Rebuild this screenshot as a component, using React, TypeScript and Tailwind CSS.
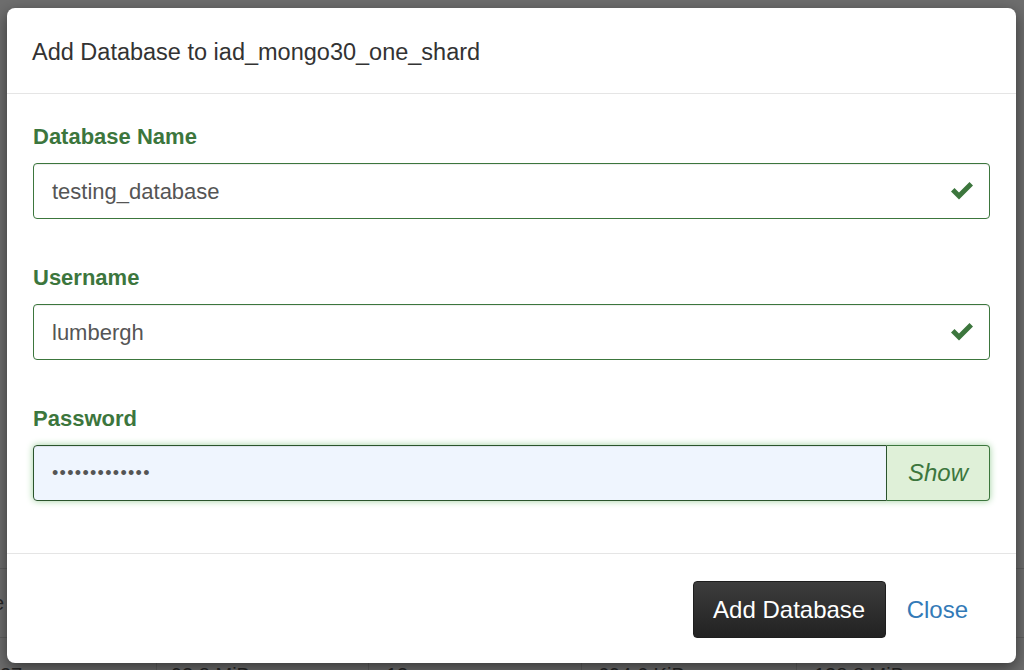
import React from 'react';

const font = { fontFamily: '"Liberation Sans", Arial, sans-serif' };

const Check: React.FC = () => (
  <svg width="26" height="20" viewBox="0 0 26 20" className="shrink-0">
    <path d="M2 10.5 L5.5 7 L10 11.5 L20.5 1 L24 4.5 L10 18.5 Z" fill="#3c763d" />
  </svg>
);

const Field: React.FC<{ label: string; value: string }> = ({ label, value }) => (
  <div className="flex flex-col">
    <label className="text-[22px] leading-[24px] font-bold text-[#3c763d] mb-[14px]">{label}</label>
    <div className="h-[56px] flex items-center justify-between pl-[18px] pr-[14px] border border-[#3c763d] rounded-[4px] shadow-[inset_0_1px_1px_rgba(0,0,0,0.075)]">
      <span className="text-[22px] text-[#555]">{value}</span>
      <Check />
    </div>
  </div>
);

export default function App() {
  return (
    <div className="relative h-[670px] w-[1024px] overflow-hidden bg-[#6e6e6e]" style={font}>
      {/* page content behind the backdrop */}
      <div className="flex flex-col pt-[568px] text-[20px] text-[#262626]">
        <div className="h-[69px] border-t border-[#5f5f5f] flex items-center">
          <span className="-ml-[7px]">e</span>
        </div>
        <div className="h-[40px] border-t border-[#5f5f5f] grid grid-cols-[157px_212px_213px_215px_1fr]">
          <div className="pt-[22px] pl-0 border-r border-[#5f5f5f]">27</div>
          <div className="pt-[22px] pl-[14px] border-r border-[#5f5f5f]">93.8 MiB</div>
          <div className="pt-[22px] pl-[17px] border-r border-[#5f5f5f]">13</div>
          <div className="pt-[22px] pl-[16px] border-r border-[#5f5f5f]">694.6 KiB</div>
          <div className="pt-[22px] pl-[17px]">138.8 MiB</div>
        </div>
      </div>

      {/* modal */}
      <div className="absolute left-[7px] top-[8px] w-[1009px] h-[655px] bg-white rounded-[8px] shadow-[0_5px_15px_rgba(0,0,0,0.5)] flex flex-col">
        <div className="h-[86px] px-[25px] pt-[4px] flex items-center border-b border-[#e5e5e5]">
          <h4 className="text-[23.5px] text-[#333]">Add Database to iad_mongo30_one_shard</h4>
        </div>

        <div className="flex-1 px-[26px] pt-[31px] flex flex-col gap-[47px]">
          <Field label="Database Name" value="testing_database" />
          <Field label="Username" value="lumbergh" />
          <div className="flex flex-col">
            <label className="text-[22px] leading-[24px] font-bold text-[#3c763d] mb-[14px]">Password</label>
            <div className="flex h-[56px] rounded-[4px] shadow-[0_0_7px_#9fd19f]">
              <div className="flex-1 flex items-center pl-[18px] bg-[#eff5fe] border border-[#2b542c] rounded-l-[4px] shadow-[inset_0_1px_1px_rgba(0,0,0,0.075)]">
                <span className="text-[18px] tracking-[1.3px] text-[#555]">•••••••••••••</span>
              </div>
              <div className="w-[103px] flex items-center justify-center bg-[#dff0d8] border border-l-0 border-[#3c763d] rounded-r-[4px]">
                <span className="text-[24px] italic text-[#3c763d]">Show</span>
              </div>
            </div>
          </div>
        </div>

        <div className="h-[110px] border-t border-[#e5e5e5] flex items-start justify-end pt-[27px] pr-[48px] gap-[21px]">
          <button className="h-[57px] w-[193px] rounded-[4px] border border-[#1e1e1e] bg-gradient-to-b from-[#3d3d3d] to-[#222] text-white text-[24px]">
            Add Database
          </button>
          <a className="h-[57px] flex items-center text-[24px] text-[#337ab7]">Close</a>
        </div>
      </div>
    </div>
  );
}
